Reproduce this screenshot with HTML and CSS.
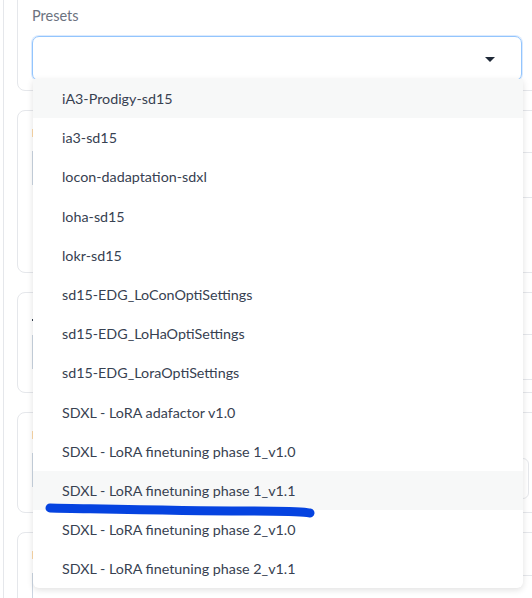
FILE: index.html
```html
<!DOCTYPE html>
<html>
<head>
<meta charset="utf-8">
<link rel="stylesheet" href="styles.css">
</head>
<body>
<div class="page">
  <div class="rail">
    <div class="card card-presets">
      <div class="label">Presets</div>
      <div class="select">
        <span class="caret"></span>
      </div>
    </div>

    <div class="card card-a">
      <div class="mark orange"></div>
      <div class="box box-a1"></div>
      <div class="divider d1"></div>
      <div class="divider d2"></div>
    </div>

    <div class="card card-b">
      <div class="mark dark"></div>
      <div class="box box-b1"></div>
      <div class="divider d3"></div>
      <div class="divider d4"></div>
    </div>

    <div class="card card-c">
      <div class="mark orange"></div>
      <div class="box box-c1"></div>
      <div class="field"></div>
    </div>

    <div class="card card-d">
      <div class="mark orange"></div>
      <div class="box box-d1"></div>
      <div class="divider d5"></div>
    </div>
  </div>

  <ul class="menu">
    <li class="item hover">iA3-Prodigy-sd15</li>
    <li class="item">ia3-sd15</li>
    <li class="item">locon-dadaptation-sdxl</li>
    <li class="item">loha-sd15</li>
    <li class="item">lokr-sd15</li>
    <li class="item">sd15-EDG_LoConOptiSettings</li>
    <li class="item">sd15-EDG_LoHaOptiSettings</li>
    <li class="item">sd15-EDG_LoraOptiSettings</li>
    <li class="item">SDXL - LoRA adafactor v1.0</li>
    <li class="item">SDXL - LoRA finetuning phase 1_v1.0</li>
    <li class="item hover">SDXL - LoRA finetuning phase 1_v1.1</li>
    <li class="item">SDXL - LoRA finetuning phase 2_v1.0</li>
    <li class="item">SDXL - LoRA finetuning phase 2_v1.1</li>
  </ul>

  <svg class="scribble" width="280" height="22" viewBox="0 0 280 22">
    <path d="M6 8 C 60 9, 140 11, 200 11 S 258 12, 266 13" fill="none" stroke="#0543e0" stroke-width="9" stroke-linecap="round"/>
  </svg>
</div>
</body>
</html>
```

FILE: styles.css
```css
* { box-sizing: border-box; }
html, body {
  margin: 0;
  padding: 0;
  background: #ffffff;
  width: 532px;
  height: 598px;
  overflow: hidden;
}
.page {
  position: relative;
  width: 532px;
  height: 598px;
  overflow: hidden;
  font-family: "Lato", "Noto Sans", sans-serif;
}
.rail {
  margin-left: 3px;
  border-left: 1px solid #e5e7eb;
  height: 598px;
  padding-left: 13px;
  display: flex;
  flex-direction: column;
  gap: 19px;
  overflow: hidden;
}
.card {
  position: relative;
  flex-shrink: 0;
  width: 540px;
  border: 1px solid #e5e7eb;
  border-radius: 8px;
  background: #ffffff;
  padding-left: 14px;
}
.card-presets {
  margin-top: -20px;
  height: 111px;
  padding-top: 26px;
}
.label {
  font-size: 14.5px;
  color: #6b7280;
  line-height: 18px;
  height: 18px;
}
.select {
  margin-top: 11px;
  width: 490px;
  height: 45px;
  border: 1px solid #93c5fd;
  border-radius: 7px;
  box-shadow: 0 0 0 1px #dbeafe;
  position: relative;
}
.caret {
  position: absolute;
  right: 26px;
  top: 20px;
  width: 0;
  height: 0;
  border-left: 5px solid transparent;
  border-right: 5px solid transparent;
  border-top: 5px solid #1f2937;
}
.card-a { height: 163px; }
.card-b { height: 101px; }
.card-c { height: 101px; }
.card-d { height: 90px; }
.mark {
  width: 3px;
  height: 8px;
  margin-top: 18px;
}
.mark.orange { background: #fcd9a8; }
.mark.dark { background: #374151; height: 2px; margin-top: 26px; }
.box {
  margin-top: 14px;
  width: 480px;
  height: 34px;
  border-left: 1px solid #cbd5e1;
}
.divider {
  position: absolute;
  left: 500px;
  width: 40px;
  border-top: 1px solid #e5e7eb;
}
.d1 { top: 41px; }
.d2 { top: 86px; }
.d3 { top: 41px; }
.d4 { top: 86px; }
.d5 { top: 42px; }
.field {
  position: absolute;
  left: 400px;
  top: 45px;
  width: 111px;
  height: 41px;
  border: 1px solid #e5e7eb;
  border-radius: 6px;
}
.menu {
  position: absolute;
  left: 33px;
  top: 79px;
  width: 490px;
  margin: 0;
  padding: 0;
  list-style: none;
  background: #ffffff;
  box-shadow: 0 2px 6px rgba(0,0,0,0.12);
  border-radius: 0 0 6px 6px;
}
.item {
  height: 39.2px;
  line-height: 39.2px;
  padding-left: 29px;
  font-size: 14.3px;
  color: #374151;
  white-space: nowrap;
}
.item.hover { background: #f7f8f8; }
.scribble {
  position: absolute;
  left: 44px;
  top: 500px;
}
```
